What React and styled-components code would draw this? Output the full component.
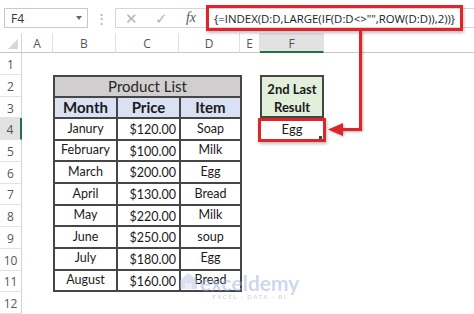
import React from 'react'
import styled, { createGlobalStyle } from 'styled-components'

const GlobalStyle = createGlobalStyle`
  html, body {
    margin: 0;
    padding: 0;
    background: #fff;
  }
  body {
    font-family: 'Lato', 'Liberation Sans', sans-serif;
  }
`

const Page = styled.div`
  position: relative;
  width: 474px;
  height: 314px;
  overflow: hidden;
  background: #fff;
`

// ---------- formula toolbar ----------
const Toolbar = styled.div`
  height: 33px;
  box-sizing: border-box;
  padding: 8px 0 0 4px;
  display: flex;
  align-items: flex-start;
  font-family: 'Open Sans', 'Liberation Sans', sans-serif;
`

const NameBox = styled.div`
  flex: 0 0 84px;
  height: 20px;
  box-sizing: border-box;
  border: 1px solid #c9c9c9;
  display: flex;
  align-items: center;
  justify-content: space-between;
  padding: 0 5px 0 6px;
  font-size: 12px;
  color: #333;
`

const Caret = styled.span`
  width: 0;
  height: 0;
  border-left: 3.5px solid transparent;
  border-right: 3.5px solid transparent;
  border-top: 4px solid #666;
`

const Dots = styled.div`
  flex: 0 0 27px;
  height: 20px;
  line-height: 20px;
  text-align: center;
  color: #aaa;
  font-size: 13px;
`

const FormulaBar = styled.div`
  flex: 1;
  min-width: 0;
  height: 20px;
  box-sizing: border-box;
  border: 1px solid #d6d6d6;
  border-right: none;
  display: flex;
  align-items: stretch;
`

const IconBtn = styled.div`
  flex: 0 0 30px;
  display: flex;
  align-items: center;
  justify-content: center;
  color: ${p => (p.$dark ? '#555' : '#b4b4b4')};
  font-size: ${p => p.$size || 13}px;
  font-family: ${p => (p.$serif ? "'Liberation Serif', serif" : 'inherit')};
  font-style: ${p => (p.$serif ? 'italic' : 'normal')};
`

const FormulaText = styled.div`
  position: relative;
  flex: 1;
  min-width: 0;
  margin-right: 11px;
  padding-left: 8px;
  display: flex;
  align-items: center;
  font-size: 11.4px;
  color: #222;
  white-space: nowrap;

  &::after {
    content: '';
    position: absolute;
    left: 0;
    right: 0;
    top: -4px;
    bottom: -4px;
    border: 3px solid #e0252a;
    box-shadow: 1px 2px 3px rgba(0, 0, 0, 0.25);
  }
`

// ---------- sheet ----------
const Sheet = styled.div`
  height: 281px;
  display: grid;
  grid-template-columns: 22px 31px 63px 63px 61px 20px 64px 1fr;
  grid-template-rows: 20px 22px repeat(11, minmax(0, 1fr));
  font-family: 'Open Sans', 'Liberation Sans', sans-serif;
`

const Corner = styled.div`
  grid-row: 1;
  grid-column: 1;
  position: relative;
  border-right: 1px solid #d4d4d4;
  border-bottom: 1px solid #c8c8c8;

  &::after {
    content: '';
    position: absolute;
    right: 3px;
    bottom: 3px;
    border-left: 10px solid transparent;
    border-bottom: 10px solid #d8d8d8;
  }
`

const ColHead = styled.div`
  grid-row: 1;
  grid-column: ${p => p.$col};
  display: flex;
  align-items: center;
  justify-content: center;
  padding-top: 2px;
  font-size: 12px;
  color: #555;
  background: ${p => (p.$active ? '#e2e2e2' : '#fff')};
  border-right: ${p => (p.$last ? 'none' : '1px solid #e0e0e0')};
  border-bottom: ${p => (p.$active ? '2px solid #217346' : '1px solid #c8c8c8')};
  box-sizing: border-box;
`

const RowHead = styled.div`
  grid-column: 1;
  grid-row: ${p => p.$row};
  display: flex;
  align-items: center;
  justify-content: center;
  padding-top: 2px;
  font-size: 12px;
  color: #555;
  background: ${p => (p.$active ? '#e2e2e2' : '#fff')};
  border-right: ${p => (p.$active ? '2px solid #217346' : '1px solid #d4d4d4')};
  border-bottom: 1px solid #e3e3e3;
  box-sizing: border-box;
`

const TableArea = styled.div`
  grid-column: 3 / 6;
  grid-row: 3 / 13;
  min-height: 0;
`

const Table = styled.table`
  width: 100%;
  height: 100%;
  border-collapse: collapse;
  table-layout: fixed;
  font-family: 'Lato', 'Liberation Sans', sans-serif;
  color: #1a1a1a;

  td, th {
    border: 2px solid #464646;
    padding: 0;
    box-sizing: border-box;
    line-height: 1;
  }
`

const TitleCell = styled.th`
  background: #d0cece;
  font-weight: 400;
  font-size: 15px;
  color: #262626;
`

const HeadCell = styled.th`
  background: #d9e1f2;
  font-weight: 700;
  font-size: 15px;
`

const Cell = styled.td`
  font-size: 12.5px;
  text-align: ${p => p.$align || 'center'};
  padding-right: ${p => (p.$align === 'right' ? '3px' : '0')} !important;
  padding-top: ${p => (p.$align === 'right' ? '3px' : '0')} !important;
  vertical-align: middle;
`

const ResultHead = styled.div`
  grid-column: 7;
  grid-row: 3 / 5;
  background: #e2efda;
  border: 2px solid #464646;
  display: flex;
  flex-direction: column;
  align-items: center;
  justify-content: center;
  font-family: 'Lato', 'Liberation Sans', sans-serif;
  font-weight: 700;
  font-size: 13px;
  line-height: 18px;
  color: #1a1a1a;
  padding-top: 2px;
`

const ResultCell = styled.div`
  grid-column: 7;
  grid-row: 5;
  position: relative;
  display: flex;
  align-items: center;
  justify-content: center;
  font-family: 'Lato', 'Liberation Sans', sans-serif;
  font-size: 13px;
  color: #1a1a1a;

  &::after {
    content: '';
    position: absolute;
    left: -2px;
    right: -2px;
    top: 0;
    bottom: -2px;
    border: 3px solid #e0252a;
    box-shadow: 1px 2px 3px rgba(0, 0, 0, 0.25);
  }
`

const FillHandle = styled.span`
  position: absolute;
  right: 2px;
  bottom: 1px;
  width: 3px;
  height: 3px;
  background: #444;
  z-index: 1;
`

// ---------- annotations ----------
const Overlay = styled.svg`
  position: absolute;
  left: 0;
  top: 0;
  pointer-events: none;
  filter: drop-shadow(1px 1px 1px rgba(0, 0, 0, 0.3));
`

const Watermark = styled.div`
  position: absolute;
  left: 179px;
  top: 272px;
  display: flex;
  align-items: flex-start;
  gap: 2px;
  pointer-events: none;
  opacity: 0.5;
`

const WmText = styled.div`
  display: flex;
  flex-direction: column;
  align-items: center;
`

const WmWord = styled.div`
  font-family: 'Lato', 'Liberation Sans', sans-serif;
  font-weight: 700;
  font-size: 21px;
  line-height: 22px;
  color: #9fb0e0;
`

const WmSub = styled.div`
  font-family: 'Lato', 'Liberation Sans', sans-serif;
  font-size: 6px;
  font-weight: 700;
  letter-spacing: 1.6px;
  color: #a8b0c8;
  margin-top: -1px;
`

const columns = ['A', 'B', 'C', 'D', 'E', 'F']

const rows = [
  ['Janury', '$120.00', 'Soap'],
  ['February', '$100.00', 'Milk'],
  ['March', '$200.00', 'Egg'],
  ['April', '$130.00', 'Bread'],
  ['May', '$220.00', 'Milk'],
  ['June', '$250.00', 'soup'],
  ['July', '$180.00', 'Egg'],
  ['August', '$160.00', 'Bread'],
]

export default function App() {
  return (
    <Page>
      <GlobalStyle />
      <Toolbar>
        <NameBox>
          F4
          <Caret />
        </NameBox>
        <Dots>⋮</Dots>
        <FormulaBar>
          <IconBtn $size={15}>✕</IconBtn>
          <IconBtn $size={15}>✓</IconBtn>
          <IconBtn $dark $serif $size={14}>fx</IconBtn>
          <FormulaText>{'{=INDEX(D:D,LARGE(IF(D:D<>"",ROW(D:D)),2))}'}</FormulaText>
        </FormulaBar>
      </Toolbar>

      <Sheet>
        <Corner />
        {columns.map((c, i) => (
          <ColHead key={c} $col={i + 2} $active={c === 'F'}>
            {c}
          </ColHead>
        ))}
        <ColHead $col={8} $last />

        {Array.from({ length: 12 }, (_, i) => (
          <RowHead key={i} $row={i + 2} $active={i + 1 === 4}>
            {i + 1}
          </RowHead>
        ))}

        <TableArea>
          <Table>
            <colgroup>
              <col style={{ width: 63 }} />
              <col style={{ width: 63 }} />
              <col style={{ width: 61 }} />
            </colgroup>
            <tbody>
              <tr>
                <TitleCell colSpan={3}>Product List</TitleCell>
              </tr>
              <tr>
                <HeadCell>Month</HeadCell>
                <HeadCell>Price</HeadCell>
                <HeadCell>Item</HeadCell>
              </tr>
              {rows.map(r => (
                <tr key={r[0]}>
                  <Cell>{r[0]}</Cell>
                  <Cell $align="right">{r[1]}</Cell>
                  <Cell>{r[2]}</Cell>
                </tr>
              ))}
            </tbody>
          </Table>
        </TableArea>

        <ResultHead>
          <span>2nd Last</span>
          <span>Result</span>
        </ResultHead>
        <ResultCell>
          Egg
          <FillHandle />
        </ResultCell>
      </Sheet>

      <Overlay width="474" height="314" viewBox="0 0 474 314">
        <path d="M360.5 31 V129.5 H340" fill="none" stroke="#e0252a" strokeWidth="3" />
        <polygon points="328,129.5 343,123 343,136" fill="#e0252a" />
      </Overlay>

      <Watermark>
        <svg width="19" height="18" viewBox="0 0 19 18">
          <path d="M9.5 1 L18 8 V17 H1 V8 Z" fill="#b7c3e6" />
          <path d="M6 17 V11 H13 V17" fill="#d6ddf2" />
        </svg>
        <WmText>
          <WmWord>exceldemy</WmWord>
          <WmSub>EXCEL · DATA · BI</WmSub>
        </WmText>
      </Watermark>
    </Page>
  )
}
